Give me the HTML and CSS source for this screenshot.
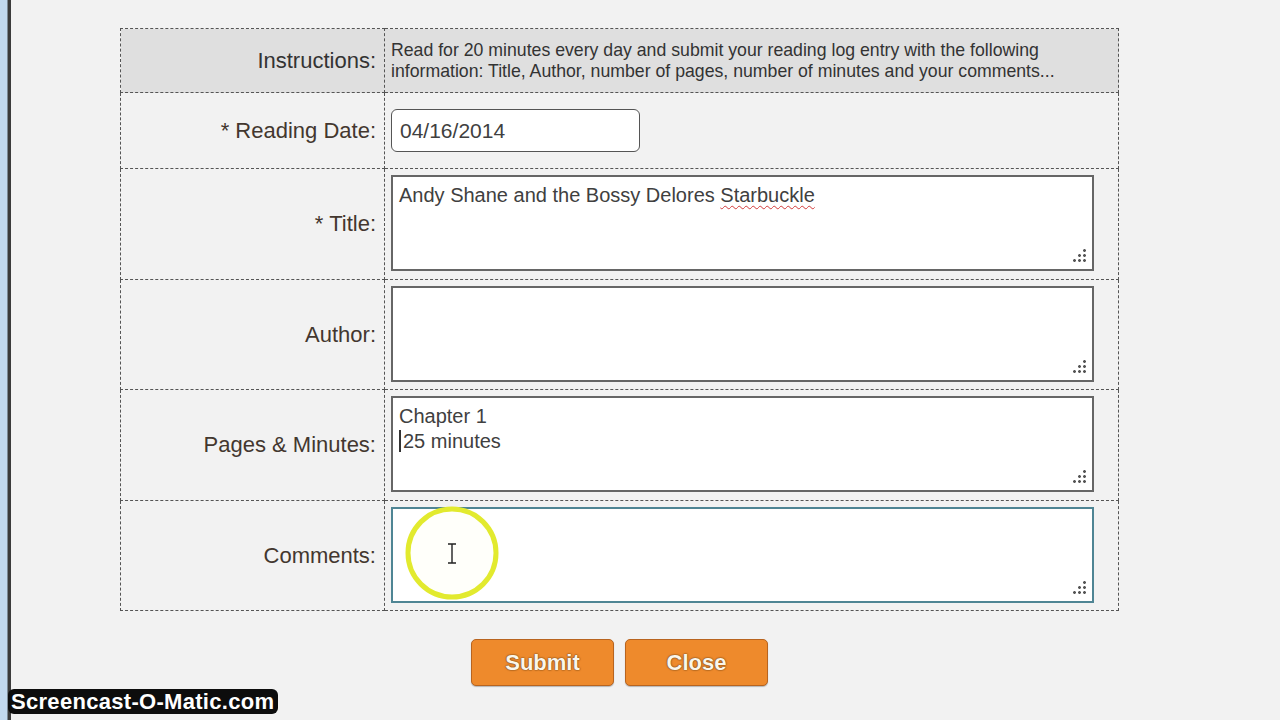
FILE: index.html
```html
<!DOCTYPE html>
<html lang="en">
<head>
  <meta charset="UTF-8" />
  <meta name="viewport" content="width=device-width, initial-scale=1.0"/>
  <title>Reading Log Entry</title>
  <link rel="stylesheet" href="styles.css">
</head>
<body>

  <div class="screen">
    <div class="frame-edge"></div>

    <main class="page">
      <table class="log-form">
        <colgroup>
          <col class="label-col">
          <col>
        </colgroup>
        <tr class="instructions">
          <th>Instructions:</th>
          <td>Read for 20 minutes every day and submit your reading log entry with the following<br>information: Title, Author, number of pages, number of minutes and your comments...</td>
        </tr>
        <tr class="row-date">
          <th>* Reading Date:</th>
          <td><div class="date-input">04/16/2014</div></td>
        </tr>
        <tr class="row-area">
          <th>* Title:</th>
          <td>
            <div class="textbox">Andy Shane and the Bossy Delores <span class="misspelled">Starbuckle</span><span class="grip"></span></div>
          </td>
        </tr>
        <tr class="row-area short">
          <th>Author:</th>
          <td><div class="textbox"><span class="grip"></span></div></td>
        </tr>
        <tr class="row-area">
          <th>Pages &amp; Minutes:</th>
          <td>
            <div class="textbox">Chapter 1<br><span class="caret"></span>25 minutes<span class="grip"></span></div>
          </td>
        </tr>
        <tr class="row-area short">
          <th>Comments:</th>
          <td><div class="textbox focused"><span class="grip"></span></div></td>
        </tr>
      </table>

      <div class="actions">
        <button class="btn">Submit</button>
        <button class="btn">Close</button>
      </div>
    </main>

    <svg class="click-ring" width="110" height="110" viewBox="0 0 110 110">
      <circle cx="55" cy="55" r="44" fill="rgba(255,255,240,0.35)" stroke="#e2ea2e" stroke-width="5"/>
      <path d="M51 46 h8 M55 46 v19 M51 65 h8" stroke="#222" stroke-width="1.4" fill="none"/>
    </svg>

    <div class="watermark">Screencast-O-Matic.com</div>
  </div>

</body>
</html>
```

FILE: styles.css
```css
* {
  margin: 0;
  padding: 0;
  box-sizing: border-box;
}

body {
  background: #f2f2f2;
  font-family: 'Liberation Sans', Arial, sans-serif;
  color: #333;
  width: 1280px;
  height: 720px;
  overflow: hidden;
}

.screen {
  position: relative;
  display: flex;
  height: 720px;
}

.frame-edge {
  width: 11px;
  flex-shrink: 0;
  background: linear-gradient(to right, #c2d9ef 0 7px, #7d8a96 7px 8px, #3b3b3b 8px 11px);
}

.page {
  flex: 1;
  padding: 28px 0 0 109px;
}

/* form table */

.log-form {
  width: 999px;
  border-collapse: collapse;
  table-layout: fixed;
}

.label-col {
  width: 264px;
}

.log-form th,
.log-form td {
  border: 1px dashed #555;
  vertical-align: middle;
}

.log-form th {
  text-align: right;
  font-weight: normal;
  font-size: 22px;
  color: #43372f;
  padding-right: 8px;
}

.log-form td {
  padding-left: 6px;
}

.instructions th,
.instructions td {
  background: #dfdfdf;
  height: 64px;
}

.instructions th {
  color: #333;
}

.instructions td {
  font-size: 17.7px;
  line-height: 21px;
  color: #333;
  padding-top: 1px;
}

.row-date td,
.row-date th {
  height: 76px;
}

.row-area th,
.row-area td {
  height: 111px;
}

.row-area.short th,
.row-area.short td {
  height: 110px;
}

.row-area td {
  vertical-align: top;
  padding-top: 6px;
}

.date-input {
  width: 249px;
  height: 43px;
  background: #fff;
  border: 1px solid #555;
  border-radius: 6px;
  font-size: 21px;
  color: #404040;
  padding: 9px 0 0 8px;
}

.textbox {
  position: relative;
  width: 703px;
  height: 96px;
  background: #fff;
  border: 2px solid #666;
  font-size: 20px;
  line-height: 25px;
  color: #404040;
  padding: 6px 0 0 6px;
}

.textbox.focused {
  border-color: #4f8594;
}

.misspelled {
  text-decoration: underline wavy #d23a3a;
  text-decoration-thickness: 1px;
  text-decoration-skip-ink: none;
  text-underline-offset: 3px;
}

.caret {
  display: inline-block;
  width: 2px;
  height: 22px;
  background: #333;
  vertical-align: -4px;
  margin-right: 2px;
}

.grip {
  position: absolute;
  right: 6px;
  bottom: 7px;
  width: 13px;
  height: 13px;
  background:
    radial-gradient(circle, #555 1.2px, transparent 1.6px) 10px 0 / 3px 3px no-repeat,
    radial-gradient(circle, #555 1.2px, transparent 1.6px) 5px 5px / 3px 3px no-repeat,
    radial-gradient(circle, #555 1.2px, transparent 1.6px) 10px 5px / 3px 3px no-repeat,
    radial-gradient(circle, #555 1.2px, transparent 1.6px) 0 10px / 3px 3px no-repeat,
    radial-gradient(circle, #555 1.2px, transparent 1.6px) 5px 10px / 3px 3px no-repeat,
    radial-gradient(circle, #555 1.2px, transparent 1.6px) 10px 10px / 3px 3px no-repeat;
}

/* buttons */

.actions {
  width: 999px;
  display: flex;
  justify-content: center;
  gap: 11px;
  margin-top: 28px;
}

.btn {
  width: 143px;
  height: 47px;
  background: #ee8a2c;
  border: 1px solid #b8641f;
  border-radius: 5px;
  box-shadow: 0 1px 1px rgba(0, 0, 0, 0.25);
  font-family: 'Liberation Sans', Arial, sans-serif;
  font-size: 22px;
  font-weight: bold;
  color: #fbf6ea;
  text-shadow: 0 0 2px #6a3d12, 0 0 1px #6a3d12;
  cursor: pointer;
}

/* recording overlays */

.click-ring {
  position: absolute;
  left: 397px;
  top: 498px;
}

.watermark {
  position: absolute;
  left: 8px;
  top: 689px;
  background: #0d0d0d;
  color: #fff;
  font-size: 22px;
  font-weight: bold;
  line-height: 25px;
  letter-spacing: 0.3px;
  padding: 0 4px 0 3px;
  border-radius: 6px;
}
```
